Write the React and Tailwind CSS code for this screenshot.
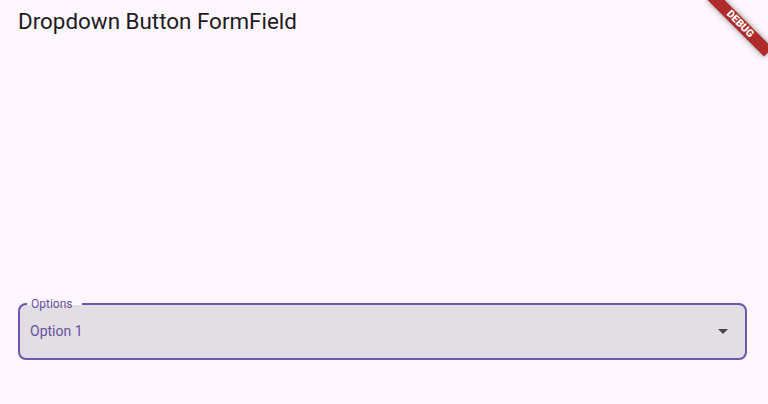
import React from 'react';

const DebugBanner = () => (
    <div
        className="absolute left-[700px] top-[18px] w-[80px] h-[12px] rotate-45 bg-[#b02a2a] shadow-[0_0_6px_rgba(0,0,0,0.45)] flex items-center justify-center pointer-events-none"
    >
        <span className="text-[10.5px] leading-none font-black text-white tracking-normal">DEBUG</span>
    </div>
);

const App = () => {
    return (
        <div
            className="relative w-full h-[404px] overflow-hidden bg-[#fef7ff] flex flex-col"
            style={{ fontFamily: 'Roboto, "Noto Sans", sans-serif' }}
        >
            {/* App bar title */}
            <h1 className="pl-[18px] pt-[7px] text-[22.4px] leading-[28px] font-normal text-[#1d1b20]">
                Dropdown Button FormField
            </h1>

            {/* Dropdown form field */}
            <div className="mt-auto mb-[44px] pl-[18px] pr-[21px]">
                <div className="relative h-[57px] rounded-lg border-2 border-[#6d56aa] bg-[#e2dee4] flex items-center pl-[10px] pr-[10px]">
                    {/* notch in the outline for the label */}
                    <div className="absolute -top-[2px] left-[7px] w-[55px] h-[2px] bg-[#fef7ff]" />
                    <span className="absolute -top-[8px] left-[11px] text-[12px] leading-[14px] text-[#6750a4]">
                        Options
                    </span>
                    <span className="flex-1 text-[14px] leading-[20px] text-[#6750a4] pb-[2px]">Option 1</span>
                    <svg width="24" height="24" viewBox="0 0 24 24" className="shrink-0 mb-[2px]">
                        <path d="M7 10l5 5 5-5z" fill="#49454f" />
                    </svg>
                </div>
            </div>

            <DebugBanner />
        </div>
    );
};

export default App;
